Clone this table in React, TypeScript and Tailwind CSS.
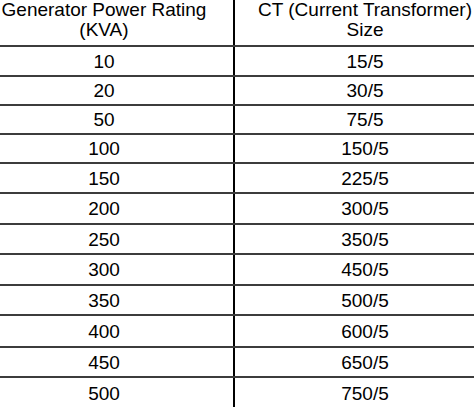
const rows = [
  { kva: "10", ct: "15/5", h: "h-[28px]" },
  { kva: "20", ct: "30/5", h: "h-[27px]" },
  { kva: "50", ct: "75/5", h: "h-[27px]" },
  { kva: "100", ct: "150/5", h: "h-[27px]" },
  { kva: "150", ct: "225/5", h: "h-[28px]" },
  { kva: "200", ct: "300/5", h: "h-[29px]" },
  { kva: "250", ct: "350/5", h: "h-[28px]" },
  { kva: "300", ct: "450/5", h: "h-[29px]" },
  { kva: "350", ct: "500/5", h: "h-[28px]" },
  { kva: "400", ct: "600/5", h: "h-[30px]" },
  { kva: "450", ct: "650/5", h: "h-[28px]" },
  { kva: "500", ct: "750/5", h: "h-[30px]" },
];

const App = () => {
  return (
    <div className="w-[474px] h-[407px] overflow-hidden bg-white">
      <div
        className="ml-[-25px] w-[520px] text-[19px] text-black"
        style={{ fontFamily: '"Liberation Sans", Arial, sans-serif' }}
      >
        <div className="grid grid-cols-[260px_260px] border-b-2 border-[#3c3c3c]">
          <div className="h-[45px] border-r-2 border-black text-center leading-[20px]">
            <p>Generator Power Rating</p>
            <p>(KVA)</p>
          </div>
          <div className="h-[45px] text-center leading-[20px]">
            <p>CT (Current Transformer)</p>
            <p>Size</p>
          </div>
        </div>

        {rows.map((row, i) => (
          <div
            key={row.kva}
            className={`grid grid-cols-[260px_260px] ${
              i < rows.length - 1 ? "border-b-2 border-[#3c3c3c]" : ""
            }`}
          >
            <div
              className={`${row.h} border-r-2 border-black flex items-center justify-center pt-[2px]`}
            >
              {row.kva}
            </div>
            <div className={`${row.h} flex items-center justify-center pt-[2px]`}>
              {row.ct}
            </div>
          </div>
        ))}
      </div>
    </div>
  );
};

export default App;
